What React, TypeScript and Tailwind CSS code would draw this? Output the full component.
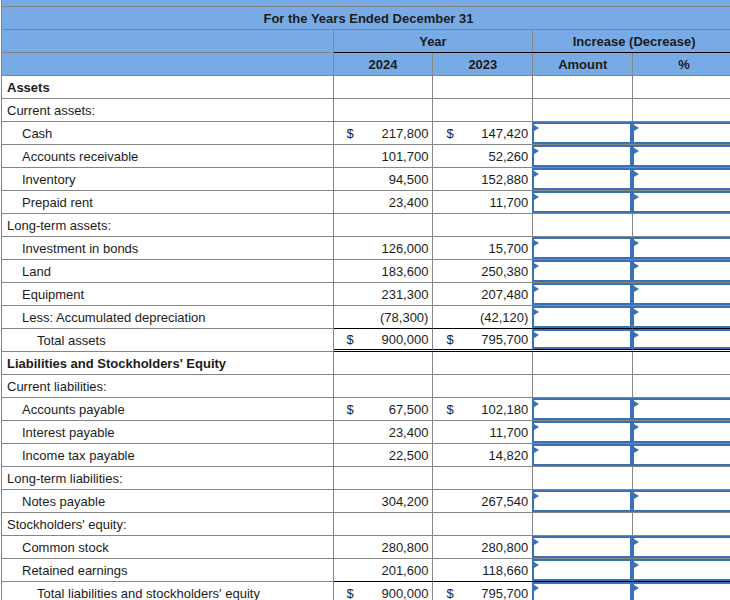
import React from 'react';

type Row = {
  label: string;
  indent?: 0 | 1 | 2;
  bold?: boolean;
  a?: string;
  b?: string;
  dollar?: boolean;
  input?: boolean;
  underline?: 'single' | 'double';
};

const rows: Row[] = [
  { label: 'Assets', bold: true },
  { label: 'Current assets:' },
  { label: 'Cash', indent: 1, a: '217,800', b: '147,420', dollar: true, input: true },
  { label: 'Accounts receivable', indent: 1, a: '101,700', b: '52,260', input: true },
  { label: 'Inventory', indent: 1, a: '94,500', b: '152,880', input: true },
  { label: 'Prepaid rent', indent: 1, a: '23,400', b: '11,700', input: true },
  { label: 'Long-term assets:' },
  { label: 'Investment in bonds', indent: 1, a: '126,000', b: '15,700', input: true },
  { label: 'Land', indent: 1, a: '183,600', b: '250,380', input: true },
  { label: 'Equipment', indent: 1, a: '231,300', b: '207,480', input: true },
  { label: 'Less: Accumulated depreciation', indent: 1, a: '(78,300)', b: '(42,120)', input: true, underline: 'single' },
  { label: 'Total assets', indent: 2, a: '900,000', b: '795,700', dollar: true, input: true, underline: 'double' },
  { label: "Liabilities and Stockholders' Equity", bold: true },
  { label: 'Current liabilities:' },
  { label: 'Accounts payable', indent: 1, a: '67,500', b: '102,180', dollar: true, input: true },
  { label: 'Interest payable', indent: 1, a: '23,400', b: '11,700', input: true },
  { label: 'Income tax payable', indent: 1, a: '22,500', b: '14,820', input: true },
  { label: 'Long-term liabilities:' },
  { label: 'Notes payable', indent: 1, a: '304,200', b: '267,540', input: true },
  { label: "Stockholders' equity:" },
  { label: 'Common stock', indent: 1, a: '280,800', b: '280,800', input: true },
  { label: 'Retained earnings', indent: 1, a: '201,600', b: '118,660', input: true, underline: 'single' },
  { label: "Total liabilities and stockholders' equity", indent: 2, a: '900,000', b: '795,700', dollar: true, input: true },
];

function bottomClass(u?: Row['underline']) {
  if (u === 'single') return 'border-b border-b-black';
  if (u === 'double') return 'border-b-[3px] border-double border-b-black';
  return 'border-b border-b-[#858585]';
}

function InputCell({ last, u }: { last?: boolean; u?: Row['underline'] }) {
  return (
    <div className={`${last ? 'w-[102px]' : 'w-[100px] border-r border-r-[#858585]'} ${bottomClass(u)} flex`}>
      <div className="relative -ml-px flex-1 border-2 border-[#3a70b5] bg-white">
        <span className="absolute left-0 top-px h-0 w-0 border-y-[3px] border-l-[5px] border-y-transparent border-l-[#3a70b5]" />
      </div>
    </div>
  );
}

function MoneyCell({ value, dollar, u }: { value?: string; dollar?: boolean; u?: Row['underline'] }) {
  return (
    <div className={`w-[100px] border-r border-r-[#858585] ${bottomClass(u)} flex items-center justify-between pl-[13px] pr-[4px]`}>
      <span>{dollar ? '$' : ''}</span>
      <span>{value}</span>
    </div>
  );
}

export default function App() {
  const gray = 'border-[#858585]';
  return (
    <div className="h-[600px] w-[730px] overflow-hidden bg-white pl-px text-[13px] leading-none text-[#1c1c1c]" style={{ fontFamily: '"Liberation Sans", Arial, sans-serif' }}>
      <div className={`w-[734px] border-l ${gray}`}>
        {/* header */}
        <div className={`h-[7px] bg-[#78abe5] border-b ${gray}`} />
        <div className={`h-[23px] bg-[#78abe5] border-b ${gray} flex items-center justify-center font-bold`}>
          For the Years Ended December 31
        </div>
        <div className="flex h-[23px] bg-[#78abe5] font-bold">
          <div className={`w-[332px] border-r border-b ${gray}`} />
          <div className="w-[200px] border-r border-r-[#858585] border-b border-b-black flex items-center justify-center">Year</div>
          <div className="w-[202px] border-b border-b-black flex items-center justify-center">Increase (Decrease)</div>
        </div>
        <div className="flex h-[23px] bg-[#78abe5] font-bold">
          <div className={`w-[332px] border-r border-b ${gray}`} />
          <div className={`w-[100px] border-r border-b ${gray} flex items-center justify-center`}>2024</div>
          <div className={`w-[100px] border-r border-b ${gray} flex items-center justify-center`}>2023</div>
          <div className={`w-[100px] border-r border-b ${gray} flex items-center justify-center`}>Amount</div>
          <div className={`w-[102px] border-b ${gray} flex items-center justify-center`}>%</div>
        </div>

        {/* body */}
        {rows.map((r) => {
          const pad = r.indent === 2 ? 'pl-[35px]' : r.indent === 1 ? 'pl-[20px]' : 'pl-[5px]';
          return (
            <div key={r.label} className="flex h-[23px]">
              <div className={`w-[332px] border-r border-b ${gray} flex items-center ${pad} ${r.bold ? 'font-bold' : ''}`}>
                {r.label}
              </div>
              <MoneyCell value={r.a} dollar={r.dollar} u={r.underline} />
              <MoneyCell value={r.b} dollar={r.dollar} u={r.underline} />
              {r.input ? (
                <>
                  <InputCell u={r.underline} />
                  <InputCell last u={r.underline} />
                </>
              ) : (
                <>
                  <div className={`w-[100px] border-r border-r-[#858585] ${bottomClass(r.underline)}`} />
                  <div className={`w-[102px] ${bottomClass(r.underline)}`} />
                </>
              )}
            </div>
          );
        })}
      </div>
    </div>
  );
}
